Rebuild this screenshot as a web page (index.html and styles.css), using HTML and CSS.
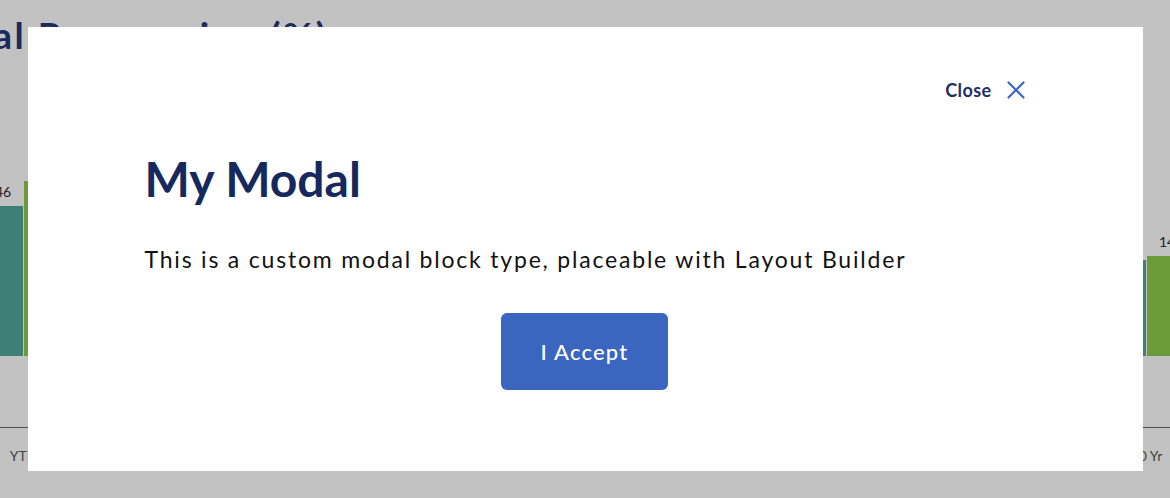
FILE: index.html
```html
<!DOCTYPE html>
<html lang="en">
<head>
    <meta charset="UTF-8">
    <meta name="viewport" content="width=device-width, initial-scale=1.0">
    <title>My Modal</title>
    <link rel="stylesheet" href="styles.css">
</head>
<body>
    <!-- page behind the modal -->
    <div class="page">
        <h1 class="page-title">Annual Progression (%)</h1>
        <div class="chart">
            <div class="bars">
                <div class="group">
                    <div class="bar-col"><span class="value">46</span><div class="bar teal" style="height: 150px;"></div></div>
                    <div class="bar-col"><span class="value">58</span><div class="bar green" style="height: 175px;"></div></div>
                </div>
                <div class="group">
                    <div class="bar-col"><span class="value">21</span><div class="bar teal" style="height: 70px;"></div></div>
                    <div class="bar-col"><span class="value">24</span><div class="bar green" style="height: 80px;"></div></div>
                </div>
                <div class="group">
                    <div class="bar-col"><span class="value">12</span><div class="bar teal" style="height: 40px;"></div></div>
                    <div class="bar-col"><span class="value">15</span><div class="bar green" style="height: 50px;"></div></div>
                </div>
                <div class="group">
                    <div class="bar-col"><span class="value">11</span><div class="bar teal" style="height: 85px;"></div></div>
                    <div class="bar-col"><span class="value">13</span><div class="bar green" style="height: 92px;"></div></div>
                </div>
                <div class="group">
                    <div class="bar-col"><span class="value">13</span><div class="bar teal" style="height: 96px;"></div></div>
                    <div class="bar-col"><span class="value">14</span><div class="bar green" style="height: 100px;"></div></div>
                </div>
            </div>
            <div class="axis"></div>
            <div class="axis-labels">
                <span>YTD</span>
                <span>1 Yr</span>
                <span>3 Yr</span>
                <span>5 Yr</span>
                <span>10 Yr</span>
            </div>
        </div>
    </div>

    <!-- modal -->
    <div class="overlay">
        <div class="modal">
            <div class="modal-top">
                <button class="close">
                    Close
                    <svg width="18" height="18" viewBox="0 0 18 18" aria-hidden="true">
                        <path d="M1.5 1.5 L16.5 16.5 M16.5 1.5 L1.5 16.5" stroke="#3b66bf" stroke-width="2.2" stroke-linecap="round" fill="none"/>
                    </svg>
                </button>
            </div>
            <h2 class="modal-title">My Modal</h2>
            <p class="modal-text">This is a custom modal block type, placeable with Layout Builder</p>
            <div class="modal-actions">
                <button class="accept">I Accept</button>
            </div>
        </div>
    </div>
</body>
</html>
```

FILE: styles.css
```css
body {
    margin: 0;
    font-family: Lato, "Liberation Sans", sans-serif;
    background-color: #fff;
    overflow: hidden;
}

/* page behind */
.page {
    margin: 0 -17px;
}
.page-title {
    margin: 13px 0 0 -88px;
    font-size: 37px;
    line-height: 44px;
    font-weight: bold;
    letter-spacing: 2.5px;
    color: #25397d;
    white-space: nowrap;
}
.bars {
    height: 299px;
    display: flex;
    justify-content: space-between;
    align-items: flex-end;
}
.group {
    display: flex;
    align-items: flex-end;
    gap: 1px;
}
.bar-col {
    width: 40px;
    display: flex;
    flex-direction: column;
    align-items: center;
}
.value {
    font-size: 14px;
    line-height: 18px;
    margin-bottom: 5px;
    color: #2d2d2d;
}
.bar {
    width: 100%;
}
.teal {
    background-color: #52a79d;
}
.green {
    background-color: #8dcb4e;
}
.axis {
    margin-top: 71px;
    height: 1px;
    background-color: #6a6a6a;
}
.axis-labels {
    display: flex;
    justify-content: space-between;
    margin-top: 18px;
}
.axis-labels span {
    width: 81px;
    text-align: center;
    font-size: 14px;
    line-height: 20px;
    color: #595959;
}

/* modal */
.overlay {
    position: fixed;
    inset: 0;
    background-color: rgba(0, 0, 0, 0.24);
    display: flex;
    align-items: center;
    justify-content: center;
}
.modal {
    width: 1115px;
    height: 444px;
    box-sizing: border-box;
    padding: 51px 118px 0 117px;
    background-color: #fff;
}
.modal-top {
    display: flex;
    justify-content: flex-end;
}
.close {
    display: flex;
    align-items: center;
    gap: 15px;
    padding: 0;
    border: none;
    background: none;
    font-family: inherit;
    font-size: 18px;
    line-height: 24px;
    font-weight: bold;
    letter-spacing: 0.4px;
    color: #1f2f66;
    cursor: pointer;
}
.modal-title {
    margin: 48px 0 0;
    font-size: 48px;
    line-height: 58px;
    font-weight: bold;
    color: #15295f;
}
.modal-text {
    margin: 37px 0 0;
    font-size: 23px;
    line-height: 28px;
    letter-spacing: 1.8px;
    color: #111;
}
.modal-actions {
    display: flex;
    justify-content: center;
    margin-top: 40px;
}
.accept {
    width: 167px;
    height: 77px;
    border: none;
    border-radius: 6px;
    background-color: #3b66bf;
    color: #fff;
    font-family: inherit;
    font-size: 22px;
    font-weight: 500;
    letter-spacing: 1.2px;
    cursor: pointer;
}
```
